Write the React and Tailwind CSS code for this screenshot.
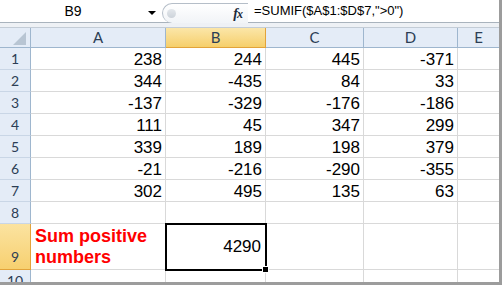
import React from 'react';

const cols = ['A', 'B', 'C', 'D', 'E'];

const data = [
  [238, 244, 445, -371],
  [344, -435, 84, 33],
  [-137, -329, -176, -186],
  [111, 45, 347, 299],
  [339, 189, 198, 379],
  [-21, -216, -290, -355],
  [302, 495, 135, 63],
];

const cellFont = { fontFamily: '"Liberation Sans", Arial, sans-serif' };
const hdrFont = { fontFamily: 'Lato, "Open Sans", sans-serif' };

const RowHeader = ({ n, selected, tall }) => (
  <div
    className={`flex justify-center border-r border-b text-[14px] text-[#2c3e55] ${tall ? 'items-end pb-[2px]' : 'items-center'} ${
      selected
        ? 'bg-gradient-to-b from-[#fbe3a0] to-[#f7d06f] border-r-[#e2a33a] border-b-[#e2a33a]'
        : 'bg-[#e4ecf7] border-r-[#9eb6ce] border-b-[#c9d6e6]'
    }`}
    style={hdrFont}
  >
    {n}
  </div>
);

const Cell = ({ value, last }) => (
  <div
    className={`flex items-center justify-end pr-[3px] pt-[2px] border-b border-[#d9d9d9] text-[17px] text-black ${last ? '' : 'border-r'}`}
    style={cellFont}
  >
    {value}
  </div>
);

const EmptyRow = ({ n }) => (
  <>
    <RowHeader n={n} />
    <Cell value="" />
    <Cell value="" />
    <Cell value="" />
    <Cell value="" />
    <Cell value="" last />
  </>
);

export default function App() {
  return (
    <div className="w-[502px] h-[285px] bg-[#9c9c9c] overflow-hidden">
      <div className="w-[499px] h-[282px] bg-white flex flex-col overflow-hidden">
        {/* Formula bar */}
        <div className="h-[23px] shrink-0 flex border-b border-[#a9b3bd] bg-white">
          <div className="w-[160px] flex items-center relative">
            <span className="w-[146px] text-center text-[14px] text-black" style={cellFont}>
              B9
            </span>
            <span className="absolute left-[148px] top-[11px] w-0 h-0 border-l-[4px] border-r-[4px] border-t-[4px] border-l-transparent border-r-transparent border-t-black" />
          </div>
          <div className="mt-[3px] ml-[2px] w-[86px] h-[20px] rounded-l-full border-l border-t border-[#b5bec8] bg-gradient-to-b from-white to-[#f1f4f7] flex items-center justify-between pl-[4px] pr-[6px]">
            <span className="w-[9px] h-[9px] rounded-full bg-gradient-to-b from-[#e4e8ec] to-[#cdd3da]" />
            <span
              className="italic font-bold text-[14px] text-[#1b2a3a] tracking-[-1px]"
              style={{ fontFamily: '"Liberation Serif", "Times New Roman", serif' }}
            >
              f<span className="text-[12px]">x</span>
            </span>
          </div>
          <div className="flex-1 flex items-center pl-[6px] text-[13px] text-black" style={cellFont}>
            =SUMIF($A$1:$D$7,"&gt;0")
          </div>
        </div>
        <div className="h-[5px] shrink-0 bg-[#eef1f5] border-b border-[#c3ccd6]" />

        {/* Sheet grid */}
        <div className="grid grid-cols-[31px_135px_100px_98px_94px_41px] grid-rows-[20px_repeat(8,22px)_46px_22px]">
          {/* corner */}
          <div className="bg-[#e4ecf7] border-r border-b border-[#9eb6ce] relative">
            <svg className="absolute right-[4px] bottom-[2px]" width="13" height="13" viewBox="0 0 13 13">
              <polygon points="13,0 13,13 0,13" fill="#b8c5d3" />
            </svg>
          </div>
          {cols.map((c, i) => (
            <div
              key={c}
              className={`flex items-center justify-center border-b border-r text-[15px] text-[#2c3e55] ${
                c === 'B'
                  ? 'bg-gradient-to-b from-[#fbe6a8] to-[#f6cf6a] border-b-[#e2a33a] border-r-[#e2a33a]'
                  : 'bg-[#e4ecf7] border-[#9eb6ce]'
              } ${i === cols.length - 1 ? 'border-r-0' : ''}`}
              style={hdrFont}
            >
              {c}
            </div>
          ))}

          {data.map((row, r) => (
            <React.Fragment key={r}>
              <RowHeader n={r + 1} />
              {row.map((v, i) => (
                <Cell key={i} value={v} />
              ))}
              <Cell value="" last />
            </React.Fragment>
          ))}

          <EmptyRow n={8} />

          {/* row 9 */}
          <RowHeader n={9} selected tall />
          <div
            className="flex flex-col justify-center pl-[4px] border-r border-b border-[#d9d9d9] text-[#ff0000] font-bold text-[18px] leading-[21px]"
            style={cellFont}
          >
            <span>Sum positive</span>
            <span>numbers</span>
          </div>
          <div className="relative flex items-center justify-end pr-[4px] border-r border-b border-[#d9d9d9] text-[17px] text-black" style={cellFont}>
            4290
            <div className="absolute left-[-1px] top-[-1px] right-[-2px] bottom-[-2px] border-2 border-black">
              <div className="absolute right-[-4px] bottom-[-4px] w-[7px] h-[7px] bg-black border border-white" />
            </div>
          </div>
          <Cell value="" />
          <Cell value="" />
          <Cell value="" last />

          <EmptyRow n={10} />
        </div>
      </div>
    </div>
  );
}
